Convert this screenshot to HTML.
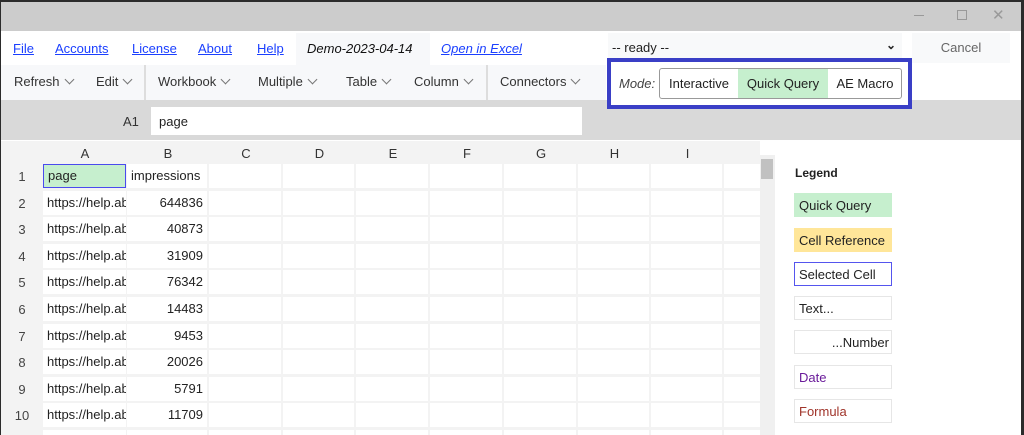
<!DOCTYPE html>
<html style="width:1024px;height:435px;overflow:hidden"><head><style>
*{margin:0;padding:0;box-sizing:border-box}
body{width:1024px;height:435px;overflow:hidden;background:#2b2b2b;font-family:"Liberation Sans",sans-serif;font-size:13px;color:#222;position:relative}
.a{position:absolute}
.win{left:1px;top:2px;width:1020px;height:433px;background:#fff}
.title{left:0;top:0;width:1020px;height:29px;background:#cccccc}
a{color:#1a3fff;text-decoration:underline}
.menu{top:41px;font-size:13px}
.tb{top:74px;color:#333}
.chev{display:inline-block;width:7px;height:7px;border-right:1px solid #777;border-bottom:1px solid #777;transform:rotate(45deg);margin-left:6px;position:relative;top:-3px}
.cell{position:absolute;background:#fff;height:24px;line-height:24px;padding:0 4px;overflow:hidden;white-space:nowrap}
.hd{position:absolute;top:146px;text-align:center;color:#333}
.rn{position:absolute;left:0;width:42px;text-align:center;color:#444}
.lg{position:absolute;left:794px;width:98px;height:24px;line-height:24px;padding-left:4px;border:1px solid #e6e6e6;background:#fff}
</style></head><body>
<div class="a win">
 <div class="a title"></div>
 <div class="a" style="left:0;top:29px;width:1020px;height:34px;background:#fff"></div>
 <div class="a" style="left:295px;top:31px;width:134px;height:34px;background:#f7f8fa"></div>
</div>
<div class="a" style="left:914px;top:15px;width:10px;height:1px;background:#999"></div>
<div class="a" style="left:957px;top:10px;width:10px;height:10px;border:1px solid #999"></div>
<div class="a" style="left:992px;top:6px;font-size:15px;color:#999">✕</div>

<a class="a menu" style="left:13px">File</a>
<a class="a menu" style="left:55px">Accounts</a>
<a class="a menu" style="left:132px">License</a>
<a class="a menu" style="left:198px">About</a>
<a class="a menu" style="left:257px">Help</a>
<div class="a menu" style="left:307px;font-style:italic;color:#111">Demo-2023-04-14</div>
<a class="a menu" style="left:441px;font-style:italic">Open in Excel</a>
<div class="a" style="left:608px;top:33px;width:294px;height:30px;background:#f8f9fa"></div>
<div class="a" style="left:612px;top:40px;color:#222">-- ready --</div>
<div class="a" style="left:886px;top:38px;font-size:12px;font-weight:bold">&#8964;</div>
<div class="a" style="left:912px;top:33px;width:98px;height:30px;background:#f8f9fa;text-align:center;line-height:30px;color:#666">Cancel</div>

<div class="a" style="left:1px;top:65px;width:605px;height:35px;background:#f7f8fa"></div>
<div class="a" style="left:144px;top:65px;width:2px;height:37px;background:#ddd"></div>
<div class="a" style="left:486px;top:65px;width:2px;height:37px;background:#ddd"></div>
<div class="a tb" style="left:14px">Refresh<span class="chev"></span></div>
<div class="a tb" style="left:96px">Edit<span class="chev"></span></div>
<div class="a tb" style="left:158px">Workbook<span class="chev"></span></div>
<div class="a tb" style="left:258px">Multiple<span class="chev"></span></div>
<div class="a tb" style="left:346px">Table<span class="chev"></span></div>
<div class="a tb" style="left:414px">Column<span class="chev"></span></div>
<div class="a tb" style="left:500px">Connectors<span class="chev"></span></div>

<div class="a" style="left:1px;top:100px;width:1020px;height:40px;background:#d9d9d9"></div>
<div class="a" style="left:607px;top:58px;width:305px;height:51px;border:4px solid #3a3fc6;background:#fff"></div>
<div class="a" style="left:619px;top:76px;font-style:italic;color:#444">Mode:</div>
<div class="a" style="left:659px;top:68px;width:243px;height:31px;border:1px solid #999;border-radius:3px;overflow:hidden">
 <div class="a" style="left:0;top:0;width:78px;height:29px;line-height:29px;text-align:center">Interactive</div>
 <div class="a" style="left:78px;top:0;width:90px;height:29px;line-height:29px;text-align:center;background:#c6efce">Quick Query</div>
 <div class="a" style="left:168px;top:0;width:74px;height:29px;line-height:29px;text-align:center">AE Macro</div>
</div>
<div class="a" style="left:123px;top:114px;color:#333">A1</div>
<div class="a" style="left:151px;top:107px;width:431px;height:28px;background:#fff;padding:7px 8px">page</div>

<div class="a" style="left:1px;top:141px;width:759px;height:294px;background:#f3f3f3;overflow:hidden">
<div class="hd" style="left:42px;width:84px;top:5px">A</div>
<div class="hd" style="left:126px;width:82px;top:5px">B</div>
<div class="hd" style="left:208px;width:74px;top:5px">C</div>
<div class="hd" style="left:282px;width:73px;top:5px">D</div>
<div class="hd" style="left:355px;width:74px;top:5px">E</div>
<div class="hd" style="left:429px;width:74px;top:5px">F</div>
<div class="hd" style="left:503px;width:74px;top:5px">G</div>
<div class="hd" style="left:577px;width:73px;top:5px">H</div>
<div class="hd" style="left:650px;width:73px;top:5px">I</div>
<div id="g"></div>
</div>
<div class="a" style="left:760px;top:155px;width:15px;height:280px;background:#f0f0f0"></div>
<div class="a" style="left:761px;top:159px;width:12px;height:20px;background:#c1c1c1"></div>
<div class="a" style="left:775px;top:141px;width:246px;height:294px;background:#fff"></div>
<div class="a" style="left:795px;top:166px;font-weight:bold;font-size:12px">Legend</div>
<div class="lg" style="top:193px;background:#c6efce;border-color:#c6efce">Quick Query</div>
<div class="lg" style="top:228px;background:#ffe699;border-color:#ffe699">Cell Reference</div>
<div class="lg" style="top:262px;border-color:#5555ee">Selected Cell</div>
<div class="lg" style="top:296px">Text...</div>
<div class="lg" style="top:330px;text-align:right;padding-right:2px">...Number</div>
<div class="lg" style="top:365px;color:#6a1b9a">Date</div>
<div class="lg" style="top:399px;color:#a0342a">Formula</div>
<div class="a" style="left:1021px;top:0;width:3px;height:435px;background:#2b2b2b"></div>
<script>
var cols=[[42,83],[126,80],[208,72],[282,71],[355,72],[429,72],[503,72],[577,71],[650,71],[723,36]];
var b=['impressions','644836','40873','31909','76342','14483','9453','20026','5791','11709',''];
var h='';
for(var r=0;r<11;r++){var t=Math.round(23+r*26.6);
 if(r<10)h+='<div class="rn" style="top:'+(t+5)+'px">'+(r+1)+'</div>';
 for(var c=0;c<cols.length;c++){var txt='',st='';
  if(c==0){txt=r==0?'page':'https://help.abc';if(r==0)st='background:#c6efce;border:1px solid #4a4aee;line-height:22px;';}
  if(c==1){txt=b[r];if(r>0)st='text-align:right;';}
  h+='<div class="cell" style="left:'+cols[c][0]+'px;top:'+t+'px;width:'+cols[c][1]+'px;'+st+'">'+txt+'</div>';}
}
document.getElementById('g').innerHTML=h;
</script>
</body></html>
